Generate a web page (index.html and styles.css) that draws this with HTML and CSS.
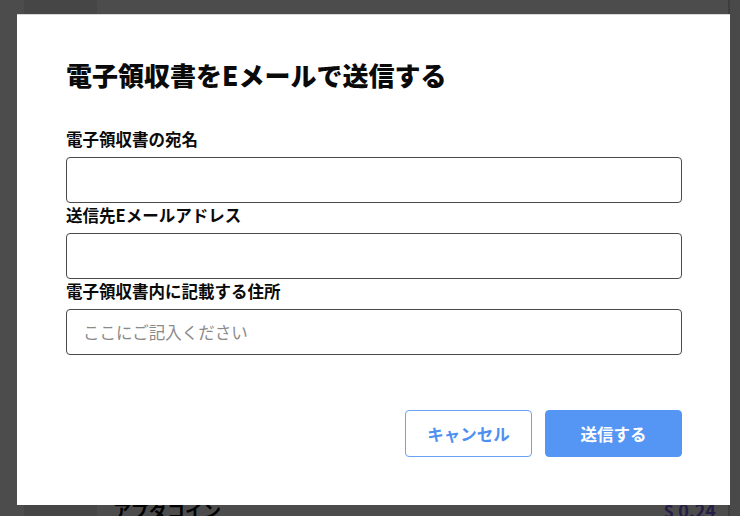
FILE: index.html
```html
<!DOCTYPE html>
<html lang="ja">
<head>
<meta charset="utf-8">
<link rel="stylesheet" href="styles.css">
</head>
<body>
<div class="page">
  <div class="rail"></div>
  <div class="sidebar"></div>
  <div class="main">
    <div class="row">
      <span class="coin">アプダコイン</span>
      <span class="price">$ 0.24</span>
    </div>
  </div>
  <div class="edge"></div>
</div>
<div class="overlay">
  <div class="modal">
    <h1 class="title">電子領収書をEメールで送信する</h1>
    <form class="form">
      <label class="label">電子領収書の宛名</label>
      <input class="input" type="text">
      <label class="label">送信先Eメールアドレス</label>
      <input class="input" type="text">
      <label class="label">電子領収書内に記載する住所</label>
      <input class="input" type="text" placeholder="ここにご記入ください">
      <div class="actions">
        <button type="button" class="btn btn-outline">キャンセル</button>
        <button type="button" class="btn btn-primary">送信する</button>
      </div>
    </form>
  </div>
</div>
</body>
</html>
```
FILE: styles.css
```css
html, body {
  margin: 0;
  height: 100%;
}
body {
  font-family: "Noto Sans CJK JP", "Noto Sans", sans-serif;
  background: #fff;
  overflow: hidden;
}
.page {
  display: flex;
  height: 516px;
}
.rail {
  width: 24px;
  background: #ffffff;
}
.sidebar {
  width: 73px;
  background: #ececec;
}
.main {
  flex: 1;
  padding: 497px 12px 0 16px;
  background: #fff;
}
.row {
  display: flex;
  justify-content: space-between;
  align-items: center;
}
.coin {
  font-size: 18px;
  font-weight: 700;
  color: #000;
}
.price {
  font-size: 18px;
  font-weight: 700;
  color: #7d62e6;
}
.edge {
  width: 10px;
  border-left: 2px solid #cfcfcf;
  background: #f6f6f6;
}
.overlay {
  position: fixed;
  inset: 0;
  background: rgba(0, 0, 0, 0.7);
  padding: 14px 0 0 17px;
  box-sizing: border-box;
}
.modal {
  width: 713px;
  height: 491px;
  box-sizing: border-box;
  background: #fff;
  border-top: 1px solid #d8d8d8;
  padding: 42px 48px 48px 49px;
  display: flex;
  flex-direction: column;
}
.title {
  margin: 0;
  font-size: 26px;
  line-height: 36px;
  font-weight: 900;
  color: #0a0a0a;
}
.form {
  display: flex;
  flex-direction: column;
  margin-top: 34px;
  flex: 1;
}
.label {
  font-size: 16.5px;
  line-height: 24px;
  font-weight: 700;
  color: #0a0a0a;
  margin-bottom: 6px;
}
.input {
  height: 46px;
  box-sizing: border-box;
  border: 1px solid #4a4a4a;
  border-radius: 4px;
  padding: 0 16px;
  font-family: inherit;
  font-size: 16.5px;
  color: #222;
  outline: none;
}
.input::placeholder {
  color: #8a8a8a;
}
.actions {
  margin-top: auto;
  display: flex;
  justify-content: flex-end;
  gap: 13px;
}
.btn {
  height: 47px;
  border-radius: 4px;
  font-family: inherit;
  font-size: 16.5px;
  font-weight: 700;
  cursor: pointer;
}
.btn-outline {
  width: 127px;
  background: #fff;
  border: 1px solid #6aa3f5;
  color: #4f8ff0;
}
.btn-primary {
  width: 137px;
  background: #5596f5;
  border: 1px solid #5596f5;
  color: #fff;
}
```
